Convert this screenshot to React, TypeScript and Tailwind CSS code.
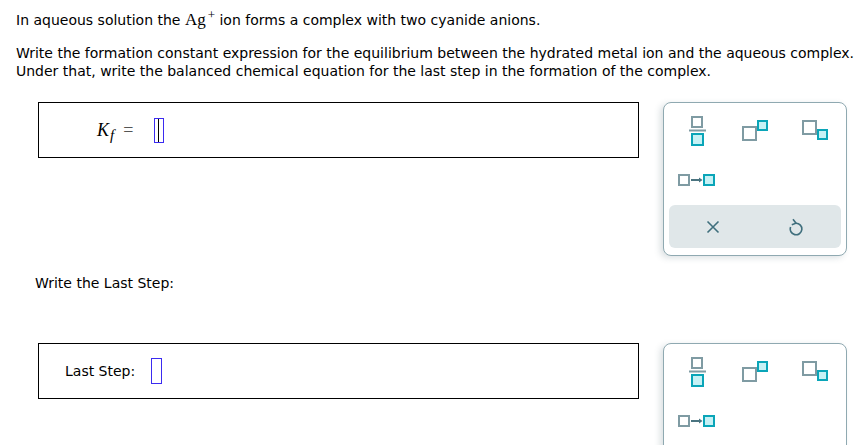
const gray = "#7f9ba3";
const teal = "#0aa5b8";
const fill = "#c6f1f5";

function FracIcon() {
  return (
    <svg width="20" height="30" viewBox="0 0 20 30">
      <rect x="4" y="1" width="10" height="10" fill="#fff" stroke={gray} strokeWidth="2" />
      <rect x="1" y="13.5" width="17" height="2" fill="#7f9ba3" />
      <rect x="4" y="18" width="11" height="11" fill={fill} stroke={teal} strokeWidth="2" />
    </svg>
  );
}

function SupIcon() {
  return (
    <svg width="28" height="22" viewBox="0 0 28 22">
      <rect x="2" y="7" width="13" height="13" fill="#fff" stroke={gray} strokeWidth="2" />
      <rect x="17" y="1" width="9" height="9" fill={fill} stroke={teal} strokeWidth="2" />
    </svg>
  );
}

function SubIcon() {
  return (
    <svg width="28" height="22" viewBox="0 0 28 22">
      <rect x="2" y="1" width="13" height="13" fill="#fff" stroke={gray} strokeWidth="2" />
      <rect x="17" y="10" width="9" height="9" fill={fill} stroke={teal} strokeWidth="2" />
    </svg>
  );
}

function ArrowIcon() {
  return (
    <svg width="38" height="14" viewBox="0 0 38 14">
      <rect x="1" y="1" width="10" height="10" fill="#fff" stroke={gray} strokeWidth="2" />
      <path d="M13 6h10" stroke="#4a7480" strokeWidth="2" />
      <path d="M21 3.5l3.5 2.5-3.5 2.5z" fill="#4a7480" />
      <rect x="26" y="1" width="10" height="10" fill={fill} stroke={teal} strokeWidth="2" />
    </svg>
  );
}

function Palette({ withBar }: { withBar: boolean }) {
  return (
    <div
      className={
        "w-[184px] rounded-lg border border-[#8fa9b1] bg-white px-[5px] shadow-[-3px_2px_6px_rgba(60,90,100,0.18)] " +
        (withBar ? "h-[154px]" : "h-[110px]")
      }
    >
      <div className="grid grid-cols-3 pt-[13px]">
        <div className="flex h-[30px] items-center justify-center">
          <FracIcon />
        </div>
        <div className="flex h-[30px] items-center justify-center pl-[1px]">
          <SupIcon />
        </div>
        <div className="flex h-[30px] items-center justify-center pl-[5px]">
          <SubIcon />
        </div>
      </div>
      <div className="mt-[28px] flex h-[14px] items-center pl-[9px]">
        <ArrowIcon />
      </div>
      {withBar && (
        <div className="mt-[17px] flex h-[43px] items-center rounded-md bg-[#e0e7e9] text-[#3f6f7d]">
          <div className="flex flex-1 items-center justify-center pl-[2px]">
            <svg width="14" height="14" viewBox="0 0 14 14">
              <path d="M1.5 1.5l11 11M12.5 1.5l-11 11" stroke="#3f6f7d" strokeWidth="1.6" />
            </svg>
          </div>
          <div className="flex flex-1 items-center justify-center pr-[4px]">
            <svg width="16" height="18" viewBox="0 0 16 18">
              <path d="M8 5.2 A5.8 5.8 0 1 1 2.6 9" fill="none" stroke="#3f6f7d" strokeWidth="1.6" />
              <path d="M5 1.2 L8 5.2 L3.8 6.8" fill="none" stroke="#3f6f7d" strokeWidth="1.6" />
            </svg>
          </div>
        </div>
      )}
    </div>
  );
}

export default function App() {
  return (
    <div className="h-[445px] w-[859px] overflow-hidden bg-white font-['DejaVu_Sans',Verdana,sans-serif] text-[14px] leading-[18px] text-black">
      <div className="pl-[16px] pt-[11px]">
        <p>
          In aqueous solution the{" "}
          <span className="font-['Liberation_Serif',serif] text-[17px]">
            Ag<sup className="relative -top-[6px] ml-[2px] text-[13px]">+</sup>
          </span>{" "}
          ion forms a complex with two cyanide anions.
        </p>
        <p className="mt-[15px]">
          Write the formation constant expression for the equilibrium between the hydrated metal ion and the aqueous
          complex.
          <br />
          Under that, write the balanced chemical equation for the last step in the formation of the complex.
        </p>
      </div>

      <div className="mt-[22px] flex items-start pl-[38px]">
        <div className="w-[601px]">
          <div className="flex h-[56px] items-center border border-black pl-[58px]">
            <span className="font-['Liberation_Serif',serif] text-[18px] italic">
              K<sub className="relative top-[4px] ml-[1px] text-[15px]">f</sub>
            </span>
            <span className="ml-[9px] font-['Liberation_Serif',serif] text-[18px] text-[#555]">=</span>
            <span className="relative ml-[21px] h-[25px] w-[10px] border border-[#3b2bf0]">
              <span className="absolute left-[3px] top-0 h-full w-px bg-black" />
            </span>
          </div>
          <p className="mt-[116px] -ml-[3px]">Write the Last Step:</p>
        </div>
        <div className="ml-[24px]">
          <Palette withBar />
        </div>
      </div>

      <div className="mt-[51px] flex items-start pl-[38px]">
        <div className="flex h-[56px] w-[601px] items-center border border-black pl-[26px]">
          <span className="text-[14px]">Last Step:</span>
          <span className="ml-[16px] h-[26px] w-[11px] border border-[#3b2bf0]" />
        </div>
        <div className="ml-[24px]">
          <Palette withBar={false} />
        </div>
      </div>
    </div>
  );
}
